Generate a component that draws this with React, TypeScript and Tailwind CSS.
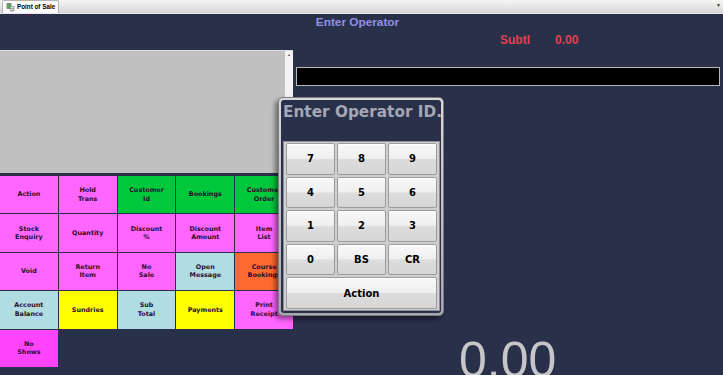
import React from 'react';

type Cell = { label: string[]; bg: string };

const CELLS: Cell[] = [
  { label: ['Action'], bg: 'bg-[#ff66ff]' },
  { label: ['Hold', 'Trans'], bg: 'bg-[#ff66ff]' },
  { label: ['Customer', 'Id'], bg: 'bg-[#00c83c]' },
  { label: ['Bookings'], bg: 'bg-[#00c83c]' },
  { label: ['Customer', 'Order'], bg: 'bg-[#00c83c]' },
  { label: ['Stock', 'Enquiry'], bg: 'bg-[#ff66ff]' },
  { label: ['Quantity'], bg: 'bg-[#ff66ff]' },
  { label: ['Discount', '%'], bg: 'bg-[#ff66ff]' },
  { label: ['Discount', 'Amount'], bg: 'bg-[#ff66ff]' },
  { label: ['Item', 'List'], bg: 'bg-[#ff66ff]' },
  { label: ['Void'], bg: 'bg-[#ff66ff]' },
  { label: ['Return', 'Item'], bg: 'bg-[#ff66ff]' },
  { label: ['No', 'Sale'], bg: 'bg-[#ff66ff]' },
  { label: ['Open', 'Message'], bg: 'bg-[#b0dce2]' },
  { label: ['Course', 'Bookings'], bg: 'bg-[#ff6a30]' },
  { label: ['Account', 'Balance'], bg: 'bg-[#b0dce2]' },
  { label: ['Sundries'], bg: 'bg-[#ffff00]' },
  { label: ['Sub', 'Total'], bg: 'bg-[#b0dce2]' },
  { label: ['Payments'], bg: 'bg-[#ffff00]' },
  { label: ['Print', 'Receipt'], bg: 'bg-[#ff66ff]' },
  { label: ['No', 'Shows'], bg: 'bg-[#ff44ff]' },
];

const KEYS = ['7', '8', '9', '4', '5', '6', '1', '2', '3', '0', 'BS', 'CR'];

const keyClass =
  'flex items-center justify-center rounded-[2px] border border-[#9c9c9c] bg-[linear-gradient(180deg,#f8f8f8_0%,#efefef_48%,#dcdcdc_52%,#d6d6d6_100%)] text-[10px] font-bold text-black shadow-[inset_0_1px_0_#ffffff]';

function TabIcon() {
  return (
    <svg width="9" height="10" viewBox="0 0 9 10">
      <rect x="0.5" y="1" width="5" height="6" rx="1" fill="#7a8a7a" />
      <circle cx="3" cy="4" r="1.8" fill="#4caf50" />
      <rect x="4" y="4" width="4.5" height="5.5" rx="1" fill="#9aa39a" />
      <rect x="5" y="5" width="2.5" height="1" fill="#e8e8e8" />
      <rect x="5" y="7" width="2.5" height="1" fill="#e8e8e8" />
    </svg>
  );
}

function OperatorDialog() {
  return (
    <div className="absolute left-[278px] top-[97px] h-[219px] w-[166px] rounded-[5px] border border-[#7d7d84] bg-[linear-gradient(180deg,#d8d8dc,#a8a8b0)] p-[2px] shadow-[-3px_3px_5px_rgba(0,0,0,0.45)]">
      <div className="flex h-full flex-col rounded-[3px] bg-[#293049]">
        <div className="h-[41px] whitespace-nowrap pl-[2px] pt-[2px] font-['DejaVu_Sans',sans-serif] text-[15.3px] font-bold leading-[20px] text-[#a3a7b6]">
          Enter Operator ID.
        </div>
        <div className="mb-[2px] ml-[2px] mr-[1px] flex-1 border border-[#8e8e94] bg-[#cfcfd2] px-[2px] py-[1px] font-['DejaVu_Sans',sans-serif]">
          <div className="grid h-full grid-cols-3 grid-rows-5 gap-[2px]">
            {KEYS.map((k) => (
              <div key={k} className={keyClass}>
                {k}
              </div>
            ))}
            <div className={`${keyClass} col-span-3`}>Action</div>
          </div>
        </div>
      </div>
    </div>
  );
}

export default function App() {
  return (
    <div className="relative h-[375px] w-[723px] overflow-hidden bg-[#293049] font-['Liberation_Sans',Arial,sans-serif]">
      {/* tab strip */}
      <div className="relative flex h-[14px] items-end border-b border-[#e8e8e8] bg-[linear-gradient(180deg,#f6f6f6,#d6d6d6)] pl-[2px]">
        <div className="flex h-[13px] items-center gap-[2px] rounded-t-[2px] border border-b-0 border-[#b4b4b4] bg-[#fbfbfb] px-[3px]">
          <TabIcon />
          <span className="text-[6.3px] font-bold leading-none text-black">Point of Sale</span>
        </div>
        <span className="absolute right-[2px] top-[3px] text-[5px] leading-none text-[#333]">▼</span>
      </div>

      {/* header */}
      <div className="relative h-[36px]">
        <div className="pt-[1px] text-center text-[11.8px] font-bold leading-[14px] text-[#9191e6]">
          <span className="ml-[-8px]">Enter Operator</span>
        </div>
        <div className="flex pl-[500px] pt-[4px] text-[12px] font-bold leading-[14px] text-[#e3404f]">
          <span className="w-[55px]">Subtl</span>
          <span>0.00</span>
        </div>
      </div>

      {/* body */}
      <div className="flex">
        <div className="flex w-[293px] flex-col gap-[3px]">
          <div className="flex h-[123px] border-t border-[#dcdcdc] bg-[#c0c0c0]">
            <div className="flex-1" />
            <div className="flex w-[8px] justify-center bg-[#f2f2f2] pt-[2px]">
              <span className="text-[4px] leading-none text-[#666]">▲</span>
            </div>
          </div>
          <div className="grid grid-cols-5 grid-rows-[repeat(5,37.4px)] gap-px font-['DejaVu_Sans',sans-serif]">
            {CELLS.map((c, i) => (
              <div
                key={i}
                className={`${c.bg} flex flex-col items-center justify-center text-[6.4px] font-bold leading-[8.4px] text-[#2a0c32]`}
              >
                {c.label.map((l) => (
                  <span key={l}>{l}</span>
                ))}
              </div>
            ))}
          </div>
        </div>

        <div className="ml-[3px] flex flex-1 flex-col">
          <div className="mt-[17px] h-[19px] w-[424px] border border-[#b8b8c0] bg-black" />
          <div className="ml-[163px] mt-[249px] text-[50px] leading-[50px] text-[#c6c6c8]">0.00</div>
        </div>
      </div>

      <OperatorDialog />
    </div>
  );
}
